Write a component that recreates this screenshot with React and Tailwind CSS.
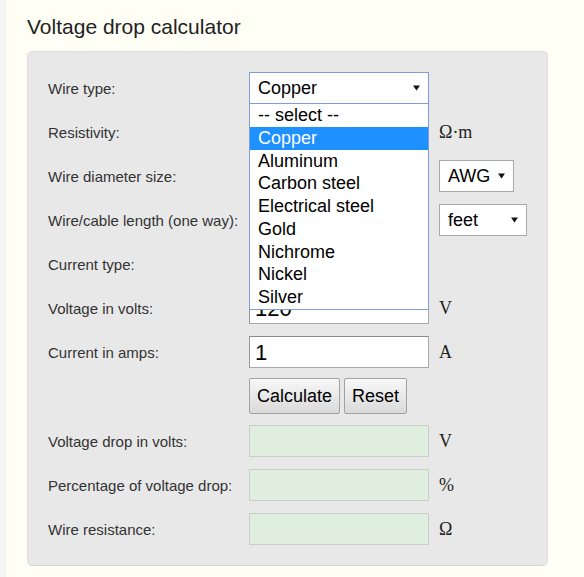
import React from "react";

const Arrow = () => (
  <svg width="7" height="6" viewBox="0 0 7 6" className="shrink-0">
    <path d="M0 0.5H7L3.5 5.5Z" fill="#111" />
  </svg>
);

const options = [
  "-- select --",
  "Copper",
  "Aluminum",
  "Carbon steel",
  "Electrical steel",
  "Gold",
  "Nichrome",
  "Nickel",
  "Silver",
];

function Label({ children }) {
  return <div className="w-[201px] shrink-0 text-[15px] text-[#333] leading-none">{children}</div>;
}

function Unit({ children }) {
  return (
    <div className="ml-[10px] text-[18px] text-[#222] leading-none" style={{ fontFamily: '"Liberation Serif", "Times New Roman", serif' }}>
      {children}
    </div>
  );
}

function TextInput({ value }) {
  return (
    <div className="w-[180px] h-8 bg-white border border-[#a9a9a9] border-t-[#8a8a8a] border-l-[#999] flex items-center pl-[5px] text-[22px] text-black overflow-hidden">
      {value}
    </div>
  );
}

function OutInput() {
  return <div className="w-[180px] h-8 bg-[#dfeedf] border border-[#c8cfc8]" />;
}

function SmallSelect({ value, width }) {
  return (
    <div className={`${width} h-8 bg-white border border-[#a9a9a9] flex items-center justify-between pl-[8px] pr-[8px] text-[18px] text-black`}>
      <span>{value}</span>
      <Arrow />
    </div>
  );
}

export default function App() {
  return (
    <div
      className="min-h-[577px] w-full bg-[#fffff6] border-l-[6px] border-[#f4f4f4]"
      style={{ fontFamily: '"Liberation Sans", Arial, sans-serif' }}
    >
      <div className="pl-[21px] pt-[15px] w-[542px]">
        <h1 className="text-[21px] leading-[24px] text-[#222] font-normal">Voltage drop calculator</h1>
        <div className="mt-[12px] bg-[#e8e8e8] border border-[#dedede] border-b-[#d4d4d4] rounded-[5px] pl-[20px] pt-[20px] pb-[20px]">
          <div className="flex flex-col gap-3">
            <div className="flex items-center h-8">
              <Label>Wire type:</Label>
              <div className="relative w-[180px] h-8">
                <div className="w-[180px] h-8 bg-white border border-[#7d9fd6] flex items-center justify-between pl-[8px] pr-[8px] text-[18px] text-black">
                  <span>Copper</span>
                  <Arrow />
                </div>
                <div className="absolute left-0 top-full z-10 w-[180px] bg-white border border-[#7d9fd6] border-t-0 text-[18px] text-black">
                  {options.map((o, i) => (
                    <div
                      key={o}
                      className={`h-[22.75px] leading-[22px] pl-[8px] whitespace-nowrap ${i === 1 ? "bg-[#1e90ff] text-white" : ""}`}
                    >
                      {o}
                    </div>
                  ))}
                </div>
              </div>
            </div>
            <div className="flex items-center h-8">
              <Label>Resistivity:</Label>
              <TextInput value="" />
              <Unit>Ω·m</Unit>
            </div>
            <div className="flex items-center h-8">
              <Label>Wire diameter size:</Label>
              <TextInput value="" />
              <div className="ml-[10px]">
                <SmallSelect value="AWG" width="w-[75px]" />
              </div>
            </div>
            <div className="flex items-center h-8">
              <Label>Wire/cable length (one way):</Label>
              <TextInput value="" />
              <div className="ml-[10px]">
                <SmallSelect value="feet" width="w-[88px]" />
              </div>
            </div>
            <div className="flex items-center h-8">
              <Label>Current type:</Label>
              <SmallSelect value="" width="w-[180px]" />
            </div>
            <div className="flex items-center h-8">
              <Label>Voltage in volts:</Label>
              <TextInput value="120" />
              <Unit>V</Unit>
            </div>
            <div className="flex items-center h-8">
              <Label>Current in amps:</Label>
              <TextInput value="1" />
              <Unit>A</Unit>
            </div>
          </div>
          <div className="flex items-center h-9 mt-[10px]">
            <div className="w-[201px] shrink-0" />
            <div className="flex gap-[4px] h-9">
              <button className="h-9 px-[7px] border border-[#a3a3a3] rounded-[2px] bg-gradient-to-b from-[#f8f8f8] to-[#dadada] text-[18px] text-black">
                Calculate
              </button>
              <button className="h-9 px-[7px] border border-[#a3a3a3] rounded-[2px] bg-gradient-to-b from-[#f8f8f8] to-[#dadada] text-[18px] text-black">
                Reset
              </button>
            </div>
          </div>
          <div className="flex flex-col gap-3 mt-[11px]">
            <div className="flex items-center h-8">
              <Label>Voltage drop in volts:</Label>
              <OutInput />
              <Unit>V</Unit>
            </div>
            <div className="flex items-center h-8">
              <Label>Percentage of voltage drop:</Label>
              <OutInput />
              <Unit>%</Unit>
            </div>
            <div className="flex items-center h-8">
              <Label>Wire resistance:</Label>
              <OutInput />
              <Unit>Ω</Unit>
            </div>
          </div>
        </div>
      </div>
    </div>
  );
}
